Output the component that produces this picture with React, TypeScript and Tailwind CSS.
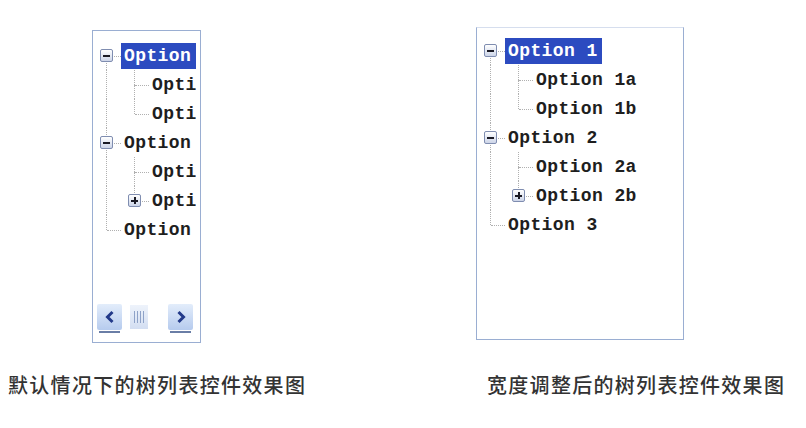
import type { ReactNode } from "react";

type TreeNode = { label: string; open?: boolean; selected?: boolean; children?: TreeNode[] };
type FlatRow = { node: TreeNode; guides: boolean[]; hasNext: boolean; first: boolean };

const tree: TreeNode[] = [
  {
    label: "Option 1",
    open: true,
    selected: true,
    children: [{ label: "Option 1a" }, { label: "Option 1b" }],
  },
  {
    label: "Option 2",
    open: true,
    children: [{ label: "Option 2a" }, { label: "Option 2b", open: false, children: [{ label: "Option 2b-1" }] }],
  },
  { label: "Option 3" },
];

function flatten(nodes: TreeNode[], guides: boolean[], out: FlatRow[], root: boolean) {
  nodes.forEach((n, i) => {
    const hasNext = i < nodes.length - 1;
    out.push({ node: n, guides, hasNext, first: root && i === 0 });
    if (n.children && n.open) flatten(n.children, [...guides, hasNext], out, false);
  });
  return out;
}

const rows = flatten(tree, [], [], true);

function Expander({ open }: { open: boolean }) {
  return (
    <span className="absolute left-[7px] top-[8px] w-[13px] h-[13px] border border-[#7f8db0] rounded-[2px] bg-gradient-to-b from-white to-[#cdd5e8] flex items-center justify-center">
      <span className="absolute w-[7px] h-[2px] bg-[#1a1a24]" />
      {!open && <span className="absolute w-[2px] h-[7px] bg-[#1a1a24]" />}
    </span>
  );
}

function TreeRow({ row }: { row: FlatRow }) {
  const { node, guides, hasNext, first } = row;
  const hasKids = !!node.children && node.children.length > 0;
  return (
    <div className="flex h-[29px] items-center">
      {guides.map((g, i) => (
        <span key={i} className="relative shrink-0 w-[28px] h-full">
          {g && <span className="absolute left-[13px] top-0 bottom-0 border-l border-dotted border-[#b0b0b0]" />}
        </span>
      ))}
      <span className="relative shrink-0 w-[28px] h-full">
        {!first && <span className="absolute left-[13px] top-0 h-1/2 border-l border-dotted border-[#b0b0b0]" />}
        {hasNext && <span className="absolute left-[13px] top-1/2 bottom-0 border-l border-dotted border-[#b0b0b0]" />}
        <span className="absolute left-[14px] right-0 top-1/2 border-t border-dotted border-[#b0b0b0]" />
        {hasKids && <Expander open={!!node.open} />}
      </span>
      <span
        className={`shrink-0 whitespace-nowrap h-[26px] leading-[26px] pl-[3px] pr-[4px] text-[18px] font-bold tracking-[0.4px] ${
          node.selected ? "bg-[#2c4bc0] text-white" : "text-[#1e1e1e]"
        }`}
      >
        {node.label}
      </span>
    </div>
  );
}

function Tree() {
  return (
    <div style={{ fontFamily: "'Liberation Mono', 'DejaVu Sans Mono', monospace" }}>
      {rows.map((r) => (
        <TreeRow key={r.node.label} row={r} />
      ))}
    </div>
  );
}

function ArrowButton({ dir }: { dir: "left" | "right" }) {
  return (
    <div className="relative w-[25px] h-[26px] rounded-[2px] bg-gradient-to-b from-[#e3edfb] to-[#b6cbee] flex items-center justify-center">
      <svg width="12" height="14" viewBox="0 0 12 14">
        <path
          d={dir === "left" ? "M8.5 2 L3.5 7 L8.5 12" : "M3.5 2 L8.5 7 L3.5 12"}
          fill="none"
          stroke="#233a8a"
          strokeWidth="3"
        />
      </svg>
      <span className="absolute left-[2px] right-[2px] -bottom-[3px] h-[2px] bg-[#6a7ea6]" />
    </div>
  );
}

function Caption({ children }: { children: ReactNode }) {
  return (
    <p
      className="text-[20px] leading-[24px] tracking-[1.3px] font-medium text-[#333] whitespace-nowrap"
      style={{ fontFamily: "'Noto Sans CJK SC', 'Noto Sans', sans-serif" }}
    >
      {children}
    </p>
  );
}

export default function App() {
  return (
    <div className="w-[806px] h-[428px] bg-white flex overflow-hidden">
      <div className="w-[476px] shrink-0 flex flex-col">
        <div className="ml-[92px] mt-[30px] w-[109px] h-[313px] border border-[#9aaed2] flex flex-col">
          {/* the default width cuts the labels off, as in the reference */}
          <div className="flex-1 mr-[4px] pt-[10px] overflow-hidden">
            <Tree />
          </div>
          <div className="flex items-center h-[28px] pl-[4px] pr-[7px] mb-[11px]">
            <ArrowButton dir="left" />
            <div className="flex-1 flex items-center pl-[8px]">
              <div className="w-[18px] h-[24px] bg-gradient-to-b from-[#eef3fb] to-[#d3def2] flex items-center justify-center gap-[2px]">
                <span className="w-px h-[12px] bg-[#8ea2c8]" />
                <span className="w-px h-[12px] bg-[#8ea2c8]" />
                <span className="w-px h-[12px] bg-[#8ea2c8]" />
                <span className="w-px h-[12px] bg-[#8ea2c8]" />
              </div>
            </div>
            <ArrowButton dir="right" />
          </div>
        </div>
        <div className="ml-[8px] mt-[30px]">
          <Caption>默认情况下的树列表控件效果图</Caption>
        </div>
      </div>
      <div className="flex-1 flex flex-col">
        <div className="mt-[27px] w-[208px] h-[313px] border border-[#9aaed2] border-t-[#d6deee] overflow-hidden">
          <div className="pt-[8px]">
            <Tree />
          </div>
        </div>
        <div className="ml-[11px] mt-[33px]">
          <Caption>宽度调整后的树列表控件效果图</Caption>
        </div>
      </div>
    </div>
  );
}
